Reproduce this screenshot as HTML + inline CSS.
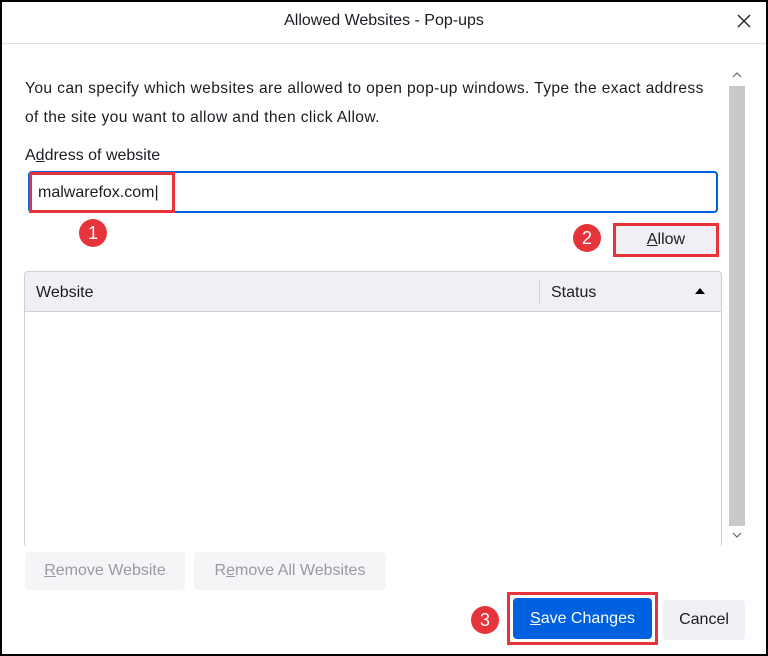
<!DOCTYPE html>
<html><head><meta charset="utf-8"><style>
*{box-sizing:border-box;margin:0;padding:0}
body{width:768px;height:656px;background:#000;font-family:"Liberation Sans",sans-serif;overflow:hidden;position:relative}
.win{position:absolute;left:2px;top:2px;width:764px;height:652px;background:#fff}
.a{position:absolute}
.t{font-size:16px;color:#1c1b22}
.badge{position:absolute;width:28px;height:28px;border-radius:50%;background:#e5353a;color:#fff;font-size:18px;text-align:center;line-height:28px}
.red{position:absolute;border:3px solid #e8333a}
u{text-decoration:underline}
</style></head><body>
<div class="win">
<div class="a t" style="left:0;width:764px;top:10px;text-align:center;font-size:16px">Allowed Websites - Pop-ups</div>
<svg class="a" style="left:734px;top:11px" width="16" height="16" viewBox="0 0 16 16"><path d="M2 2L14 14M14 2L2 14" stroke="#222" stroke-width="1.4"/></svg>
<div class="a" style="left:0;top:41px;width:764px;height:1px;background:#e0e0e6"></div>
<div class="a t" style="left:23px;top:72px;line-height:29px;width:720px;font-size:15.6px;letter-spacing:0.38px;white-space:nowrap">You can specify which websites are allowed to open pop-up windows. Type the exact address<br>of the site you want to allow and then click Allow.</div>
<div class="a t" style="left:23px;top:145px">A<u>d</u>dress of website</div>
<div class="a" style="left:26px;top:169px;width:690px;height:42px;border:2px solid #0061e0;border-radius:4px"></div>
<div class="a t" style="left:36px;top:182px">malwarefox.com|</div>
<div class="red" style="left:27px;top:170px;width:146px;height:41px"></div>
<div class="badge" style="left:77px;top:217px">1</div>
<div class="badge" style="left:571px;top:222px">2</div>
<div class="a" style="left:611px;top:221px;width:106px;height:34px;background:#f0f0f4;border:3px solid #e8333a;text-align:center;line-height:28px" ><span class="t"><u>A</u>llow</span></div>
<div class="a" style="left:22px;top:269px;width:698px;height:276px;border:1px solid #cfcfd8;border-radius:4px;border-bottom:none"></div>
<div class="a" style="left:23px;top:270px;width:696px;height:40px;background:#f0f0f4;border-bottom:1px solid #cfcfd8;border-radius:4px 4px 0 0"></div>
<div class="a t" style="left:34px;top:282px">Website</div>
<div class="a" style="left:537px;top:278px;width:1px;height:24px;background:#cfcfd8"></div>
<div class="a t" style="left:549px;top:282px">Status</div>
<div class="a" style="left:693px;top:286px;width:0;height:0;border-left:5px solid transparent;border-right:5px solid transparent;border-bottom:6px solid #000"></div>
<div class="a" style="left:727px;top:84px;width:16px;height:440px;background:#c9c9c9"></div>
<svg class="a" style="left:729px;top:68px" width="12" height="10"><path d="M2 7L6 3L10 7" fill="none" stroke="#666" stroke-width="1.2"/></svg>
<svg class="a" style="left:729px;top:528px" width="12" height="10"><path d="M2 3L6 7L10 3" fill="none" stroke="#666" stroke-width="1.2"/></svg>
<div class="a" style="left:23px;top:550px;width:160px;height:38px;background:#f5f5f7;border-radius:4px;color:#9a9aa0;font-size:16px;text-align:center;line-height:38px"><u>R</u>emove Website</div>
<div class="a" style="left:192px;top:550px;width:192px;height:38px;background:#f5f5f7;border-radius:4px;color:#9a9aa0;font-size:16px;text-align:center;line-height:38px">R<u>e</u>move All Websites</div>
<div class="badge" style="left:469px;top:604px">3</div>
<div class="a" style="left:505px;top:590px;width:151px;height:53px;border:3px solid #e8333a"></div>
<div class="a" style="left:511px;top:596px;width:139px;height:41px;background:#0061e0;border-radius:4px;color:#fff;font-size:16px;text-align:center;line-height:41px"><u>S</u>ave Changes</div>
<div class="a t" style="left:661px;top:598px;width:82px;height:40px;background:#f0f0f4;border-radius:4px;text-align:center;line-height:40px">Cancel</div>
</div>
</body></html>
